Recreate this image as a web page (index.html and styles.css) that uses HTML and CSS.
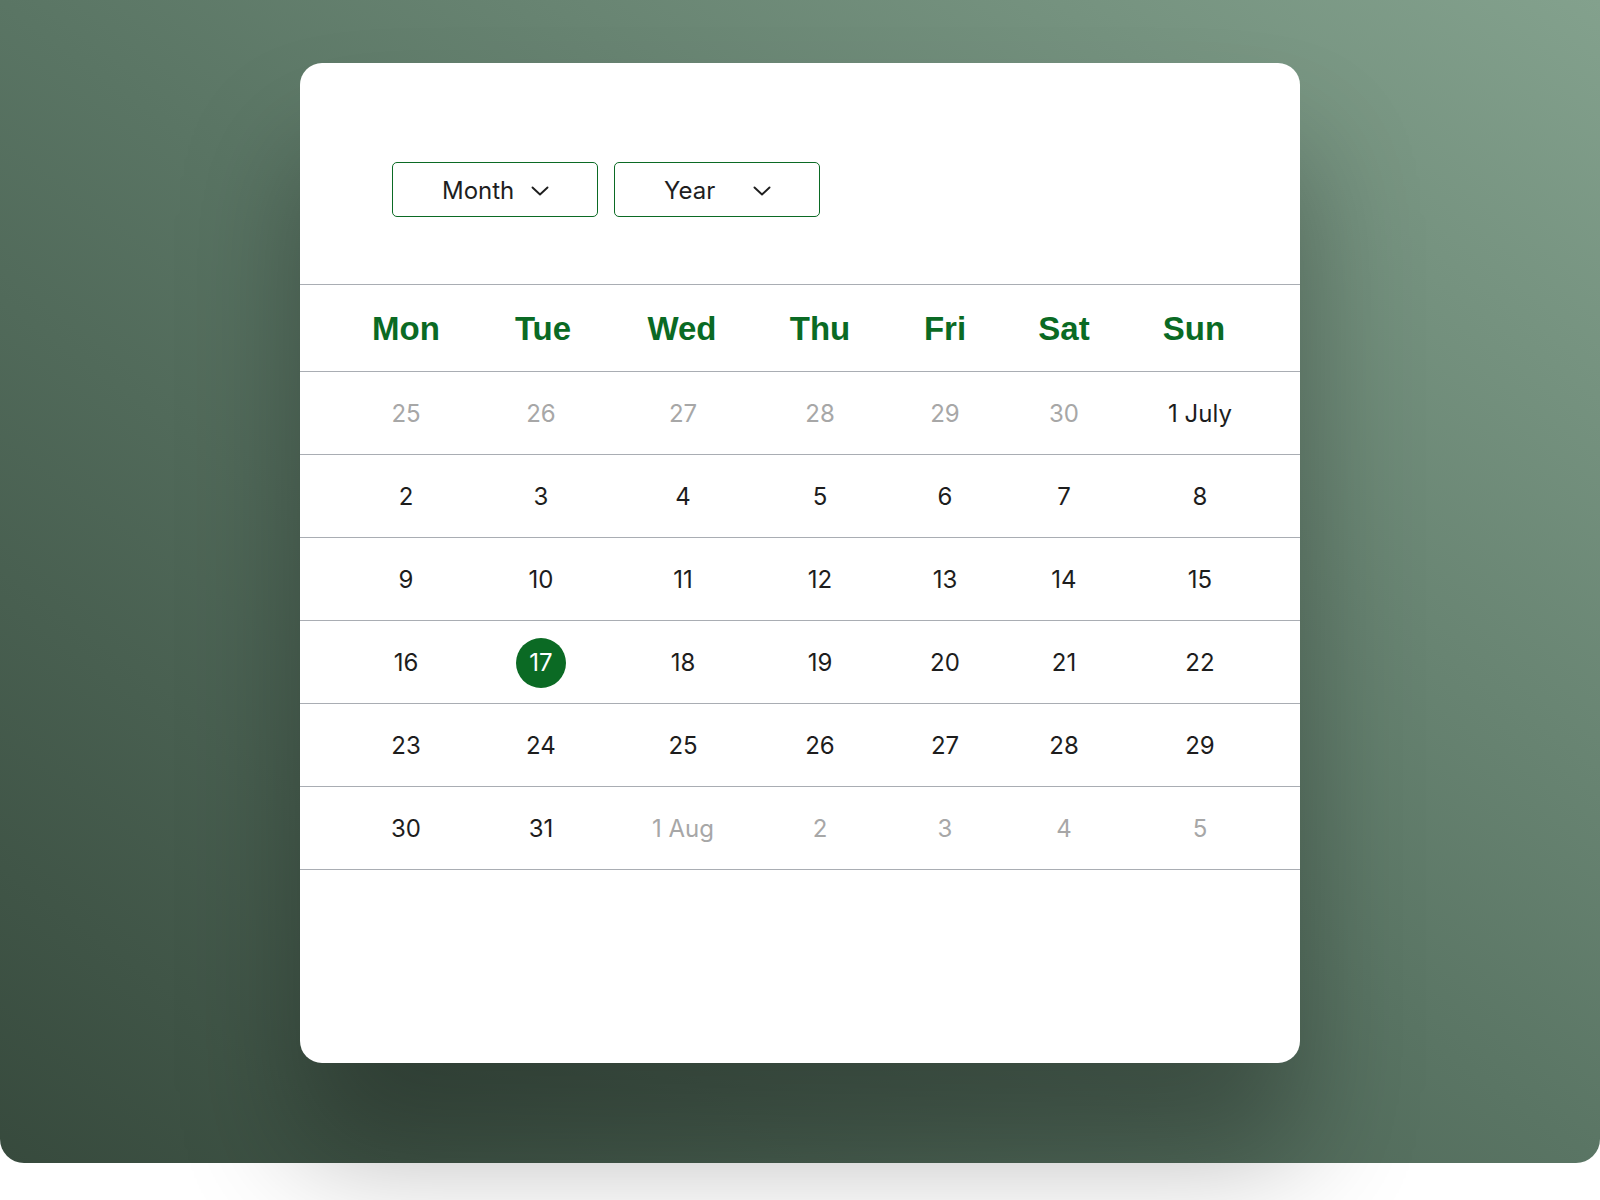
FILE: index.html
```html
<!DOCTYPE html>
<html lang="en">
<head>
<meta charset="utf-8">
<title>Calendar</title>
<link rel="stylesheet" href="styles.css">
</head>
<body>
<div class="backdrop">
  <div class="card">
    <div class="pickers">
      <button class="picker" type="button">
        <span>Month</span>
        <svg class="chev" viewBox="0 0 18 10" width="18" height="10"><path d="M1.5 1.5l7.5 7 7.5-7"/></svg>
      </button>
      <button class="picker" type="button">
        <span>Year</span>
        <svg class="chev" viewBox="0 0 18 10" width="18" height="10"><path d="M1.5 1.5l7.5 7 7.5-7"/></svg>
      </button>
    </div>

    <div class="calendar">
      <div class="week head">
        <span>Mon</span><span>Tue</span><span>Wed</span><span>Thu</span><span>Fri</span><span>Sat</span><span>Sun</span>
      </div>
      <div class="week">
        <span class="muted">25</span><span class="muted">26</span><span class="muted">27</span><span class="muted">28</span><span class="muted">29</span><span class="muted">30</span><span>1 July</span>
      </div>
      <div class="week">
        <span>2</span><span>3</span><span>4</span><span>5</span><span>6</span><span>7</span><span>8</span>
      </div>
      <div class="week">
        <span>9</span><span>10</span><span>11</span><span>12</span><span>13</span><span>14</span><span>15</span>
      </div>
      <div class="week">
        <span>16</span><span class="today">17</span><span>18</span><span>19</span><span>20</span><span>21</span><span>22</span>
      </div>
      <div class="week">
        <span>23</span><span>24</span><span>25</span><span>26</span><span>27</span><span>28</span><span>29</span>
      </div>
      <div class="week">
        <span>30</span><span>31</span><span class="muted">1 Aug</span><span class="muted">2</span><span class="muted">3</span><span class="muted">4</span><span class="muted">5</span>
      </div>
    </div>
  </div>
</div>
</body>
</html>
```

FILE: styles.css
```css
html, body {
  margin: 0;
  padding: 0;
  background: #ffffff;
}

body {
  min-height: 1200px;
  font-family: "Inter", "Noto Sans", sans-serif;
  color: #1d1d1d;
}

.backdrop {
  height: 1163px;
  box-sizing: border-box;
  padding-top: 63px;
  border-radius: 0 0 24px 24px;
  background: linear-gradient(to top right, #374a3d 0%, #5a7564 50%, #83a18d 100%);
}

.card {
  width: 1000px;
  height: 1000px;
  margin: 0 auto;
  box-sizing: border-box;
  padding-top: 99px;
  background: #ffffff;
  border-radius: 22px;
  box-shadow: 0 90px 120px rgba(0, 0, 0, 0.3);
}

/* month / year selectors */
.pickers {
  display: flex;
  gap: 16px;
  padding-left: 92px;
  margin-bottom: 67px;
}

.picker {
  width: 206px;
  height: 55px;
  box-sizing: border-box;
  padding: 2px 48px 0 49px;
  display: flex;
  align-items: center;
  justify-content: space-between;
  background: #ffffff;
  border: 1px solid #0b6a24;
  border-radius: 5px;
  font-family: "Inter", "Noto Sans", sans-serif;
  font-size: 24px;
  color: #1e1e1e;
  cursor: pointer;
}

.chev {
  display: block;
  fill: none;
  stroke: #1e1e1e;
  stroke-width: 1.9;
  stroke-linecap: round;
  stroke-linejoin: round;
}

/* month grid */
.calendar {
  border-top: 1px solid #a9adb3;
}

.week {
  display: grid;
  grid-template-columns: 130px 140px 144px 130px 120px 118px 154px;
  padding-left: 41px;
  box-sizing: border-box;
  height: 83px;
  padding-top: 2px;
  align-items: center;
  justify-items: center;
  border-bottom: 1px solid #a9adb3;
  font-size: 24px;
  line-height: 1;
}

.week.head {
  grid-template-columns: 130px 144px 134px 142px 108px 130px 130px;
  height: 87px;
  padding-top: 0;
  font-family: "Liberation Sans", Arial, sans-serif;
  font-weight: 700;
  font-size: 33px;
  color: #0a6a24;
}

.muted {
  color: #a7a7a7;
}

.today {
  width: 50px;
  height: 50px;
  border-radius: 50%;
  background: #0b6a24;
  color: #ffffff;
  display: flex;
  align-items: center;
  justify-content: center;
}
```
